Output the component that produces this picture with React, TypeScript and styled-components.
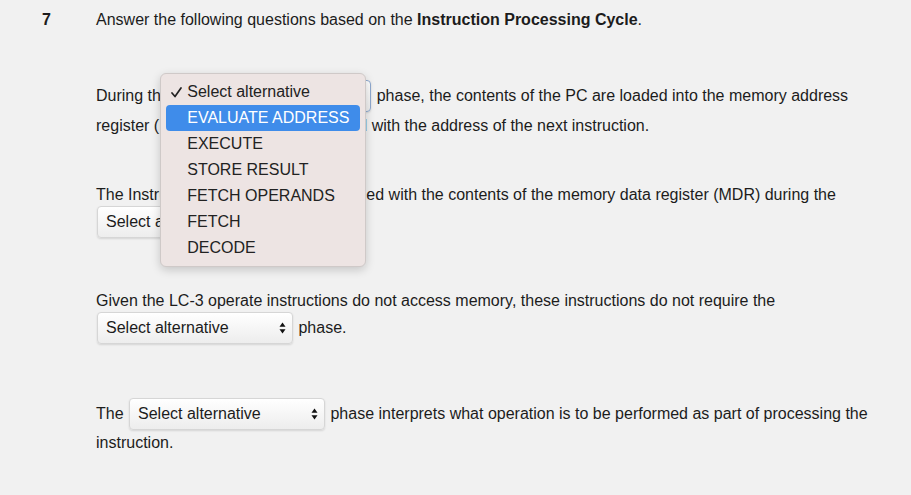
import React from "react";
import styled, { createGlobalStyle } from "styled-components";

const Global = createGlobalStyle`
  html, body { margin: 0; padding: 0; background: #f1f1f1; }
  body { font-family: "Liberation Sans", Arial, Helvetica, sans-serif; color: #1c1c1c; }
`;

const Page = styled.div`
  width: 911px;
  height: 495px;
  overflow: hidden;
  padding: 6px 0 0 42px;
  box-sizing: border-box;
`;

const Question = styled.div`
  display: grid;
  grid-template-columns: 54px 790px;
  font-size: 16px;
  line-height: 27px;
`;

const Num = styled.div`
  font-weight: 700;
`;

const Body = styled.div`
  display: flex;
  flex-direction: column;
`;

const Para = styled.p<{ $mt: number }>`
  margin: ${(p) => p.$mt}px 0 0 0;
  line-height: 27px;
`;

const SelectWrap = styled.span`
  position: relative;
  display: inline-block;
  vertical-align: baseline;
  line-height: 16px;
  margin: -6px 1px -0.5px 1px;
`;

const SelectBox = styled.span<{ $focused?: boolean }>`
  display: inline-flex;
  align-items: center;
  justify-content: space-between;
  box-sizing: border-box;
  width: 196px;
  height: 32px;
  padding: 0 6px 0 8px;
  border: 1px solid ${(p) => (p.$focused ? "#8ea9cf" : "#d6d6d6")};
  border-radius: 4px;
  background: linear-gradient(#ffffff, #ededed);
  box-shadow: 0 1px 2px rgba(0, 0, 0, 0.12);
  font-size: 16px;
  line-height: 16px;
  color: #1c1c1c;
`;

const Menu = styled.div`
  position: absolute;
  left: -15px;
  top: -7px;
  z-index: 10;
  width: 206px;
  box-sizing: border-box;
  padding: 5px;
  background: #ede4e3;
  border: 1px solid #cfc9c8;
  border-radius: 6px;
  box-shadow: 0 3px 10px rgba(0, 0, 0, 0.18);
  font-size: 16px;
`;

const Item = styled.div<{ $active?: boolean }>`
  position: relative;
  height: 26px;
  line-height: 26px;
  padding-left: 21px;
  border-radius: 4px;
  white-space: nowrap;
  background: ${(p) => (p.$active ? "#3f8cea" : "transparent")};
  color: ${(p) => (p.$active ? "#ffffff" : "#222222")};
`;

const Check = styled.svg`
  position: absolute;
  left: 5px;
  top: 8px;
`;

const Bold = styled.b`
  font-weight: 700;
`;

const Arrows = () => (
  <svg width="7" height="12" viewBox="0 0 7 12">
    <path d="M3.5 0.5 L6.5 4.8 L0.5 4.8 Z" fill="#111" />
    <path d="M3.5 11.5 L6.5 7.2 L0.5 7.2 Z" fill="#111" />
  </svg>
);

const options = [
  "EVALUATE ADDRESS",
  "EXECUTE",
  "STORE RESULT",
  "FETCH OPERANDS",
  "FETCH",
  "DECODE",
];

const Select: React.FC<{ open?: boolean }> = ({ open }) => (
  <SelectWrap>
    <SelectBox $focused={open}>
      <span>Select alternative</span>
      <Arrows />
    </SelectBox>
    {open && (
      <Menu>
        <Item>
          <Check width="11" height="11" viewBox="0 0 11 11">
            <path d="M1 6 L4 9.5 L10 1" fill="none" stroke="#222" strokeWidth="1.7" strokeLinecap="round" strokeLinejoin="round" />
          </Check>
          Select alternative
        </Item>
        {options.map((o, i) => (
          <Item key={o} $active={i === 0}>
            {o}
          </Item>
        ))}
      </Menu>
    )}
  </SelectWrap>
);

export default function App() {
  return (
    <Page>
      <Global />
      <Question>
        <Num>7</Num>
        <Body>
          <Para $mt={0}>
            Answer the following questions based on the <Bold>Instruction Processing Cycle</Bold>.
          </Para>
          <Para $mt={49}>
            During the <Select open /> phase, the contents of the PC are loaded into the memory address
            register (MAR), and the PC is updated with the address of the next instruction.
          </Para>
          <Para $mt={42}>
            The Instruction Register (IR) gets loaded with the contents of the memory data register (MDR) during the{" "}
            <Select /> phase.
          </Para>
          <Para $mt={50}>
            Given the LC-3 operate instructions do not access memory, these instructions do not require the{" "}
            <Select /> phase.
          </Para>
          <Para $mt={56}>
            The <Select /> phase interprets what operation is to be performed as part of processing the
            instruction.
          </Para>
        </Body>
      </Question>
    </Page>
  );
}
